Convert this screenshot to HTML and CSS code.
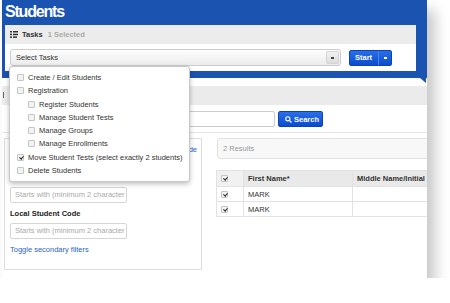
FILE: index.html
```html
<!DOCTYPE html>
<html lang="en">

<head>
    <meta charset="UTF-8">
    <meta name="viewport" content="width=device-width, initial-scale=1.0">
    <title>Students</title>
    <link rel="stylesheet" href="styles.css">
</head>

<body>
    <div class="shot">
        <header class="banner">
            <h1 class="title">Students</h1>
            <div class="tasks">
                <div class="tasks-bar">
                    <svg class="tasks-icon" width="8" height="7" viewBox="0 0 8 7">
                        <rect x="0" y="0" width="2" height="1.5" fill="#333"/>
                        <rect x="3" y="0" width="5" height="1.5" fill="#333"/>
                        <rect x="0" y="2.7" width="2" height="1.5" fill="#333"/>
                        <rect x="3" y="2.7" width="5" height="1.5" fill="#333"/>
                        <rect x="0" y="5.4" width="2" height="1.5" fill="#333"/>
                        <rect x="3" y="5.4" width="4" height="1.5" fill="#333"/>
                    </svg>
                    <span class="tasks-label">Tasks</span>
                    <span class="tasks-count">1 Selected</span>
                </div>
                <div class="tasks-row">
                    <div class="select">
                        <span class="select-text">Select Tasks</span>
                        <span class="select-arrow"><i></i></span>
                    </div>
                    <div class="btn-group">
                        <span class="btn-main">Start</span>
                        <span class="btn-caret"><i></i></span>
                    </div>
                </div>
            </div>
            <span class="notch"></span>
        </header>

        <div class="band"><span class="band-mark"></span></div>

        <div class="search-row">
            <div class="search-input"></div>
            <button class="btn-search">
                <svg width="7" height="7" viewBox="0 0 10 10">
                    <circle cx="4" cy="4" r="3" fill="none" stroke="#fff" stroke-width="1.6"/>
                    <line x1="6.2" y1="6.2" x2="9.2" y2="9.2" stroke="#fff" stroke-width="1.8"/>
                </svg>
                Search
            </button>
        </div>

        <div class="columns">
            <aside class="filters">
                <div class="filters-top"><a class="link">de</a></div>
                <div class="field-input first">Starts with (minimum 2 character</div>
                <div class="field-label">Local Student Code</div>
                <div class="field-input">Starts with (minimum 2 character</div>
                <a class="link toggle">Toggle secondary filters</a>
            </aside>

            <section class="results">
                <div class="results-count">2 Results</div>
                <table class="grid">
                    <tr class="grid-head">
                        <th class="col-cb"><span class="cb checked"></span></th>
                        <th class="col-first">First Name*</th>
                        <th>Middle Name/Initial</th>
                    </tr>
                    <tr>
                        <td class="col-cb"><span class="cb checked"></span></td>
                        <td>MARK</td>
                        <td></td>
                    </tr>
                    <tr>
                        <td class="col-cb"><span class="cb checked"></span></td>
                        <td>MARK</td>
                        <td></td>
                    </tr>
                </table>
            </section>
        </div>

        <ul class="menu">
            <li><span class="cb"></span>Create / Edit Students</li>
            <li><span class="cb"></span>Registration</li>
            <li class="sub"><span class="cb"></span>Register Students</li>
            <li class="sub"><span class="cb"></span>Manage Student Tests</li>
            <li class="sub"><span class="cb"></span>Manage Groups</li>
            <li class="sub"><span class="cb"></span>Manage Enrollments</li>
            <li><span class="cb checked"></span>Move Student Tests (select exactly 2 students)</li>
            <li><span class="cb"></span>Delete Students</li>
        </ul>
    </div>
</body>

</html>
```

FILE: styles.css
```css
body {
    margin: 0;
    background-color: #fff;
    font-family: "Liberation Sans", Arial, sans-serif;
    font-size: 7.5px;
    color: #333;
}

.shot {
    position: relative;
    margin-left: 2px;
    width: 425px;
    height: 278px;
    background-color: #fff;
    box-shadow: 8px 10px 13px rgba(0, 0, 0, 0.22);
    overflow: hidden;
}

/* blue header with task panel */
.banner {
    position: relative;
    height: 78px;
    padding: 0 11px 0 3px;
    box-sizing: border-box;
    background-color: #1b53b1;
}

.title {
    margin: 0;
    height: 25px;
    line-height: 24px;
    font-size: 16px;
    font-weight: bold;
    letter-spacing: -1.2px;
    color: #fff;
}

.tasks {
    height: 46px;
    background-color: #fff;
}

.tasks-bar {
    display: flex;
    align-items: center;
    height: 19px;
    padding-left: 5px;
    background-color: #ececec;
}

.tasks-label {
    margin-left: 4px;
    font-weight: bold;
    color: #333;
}

.tasks-count {
    margin-left: 5px;
    font-weight: bold;
    color: #aaa;
}

.tasks-row {
    display: flex;
    gap: 8px;
    padding: 5px 5px 0 5px;
}

.select {
    display: flex;
    width: 331px;
    height: 17px;
    box-sizing: border-box;
    border: 1px solid #ccc;
    border-radius: 3px;
    background: linear-gradient(#fdfdfd, #ececec);
}

.select-text {
    flex: 1;
    padding-left: 5px;
    line-height: 15px;
    color: #333;
}

.select-arrow {
    display: flex;
    align-items: center;
    justify-content: center;
    width: 11px;
    margin: 1px;
    border: 1px solid #d4d4d4;
    border-radius: 2px;
    background: linear-gradient(#f2f2f2, #dcdcdc);
}

.select-arrow i {
    width: 3px;
    height: 2px;
    background-color: #444;
}

.btn-group {
    display: flex;
    width: 43px;
    height: 16px;
    margin-top: 1px;
    border-radius: 2px;
    background: linear-gradient(#2a6fe9, #0b4ccc);
    border: 1px solid #0b45b5;
    box-sizing: border-box;
}

.btn-main {
    flex: 1;
    padding-left: 5px;
    line-height: 14px;
    font-weight: bold;
    color: #fff;
}

.btn-caret {
    display: flex;
    align-items: center;
    justify-content: center;
    width: 12px;
    border-left: 1px solid #4a82e6;
}

.btn-caret i {
    width: 3px;
    height: 1.5px;
    background-color: #fff;
}

.notch {
    position: absolute;
    right: 1px;
    bottom: -5px;
    width: 0;
    height: 0;
    border-left: 6px solid transparent;
    border-top: 5px solid #1b53b1;
}

/* page behind the menu */
.band {
    position: relative;
    height: 19px;
    margin-top: 8px;
    background-color: #ebebeb;
}

.band-mark {
    position: absolute;
    left: 1px;
    top: 6px;
    width: 1px;
    height: 6px;
    background-color: #666;
}

.search-row {
    display: flex;
    gap: 3px;
    height: 16px;
    margin-top: 6px;
    padding: 0 0 5px 8px;
    border-bottom: 1px solid #e3e3e3;
}

.search-input {
    width: 265px;
    box-sizing: border-box;
    border: 1px solid #ccc;
    border-radius: 2px;
}

.btn-search {
    display: flex;
    align-items: center;
    gap: 2px;
    width: 45px;
    padding: 0 0 0 6px;
    border: 1px solid #0b45b5;
    border-radius: 2px;
    background: linear-gradient(#2a6fe9, #0b4ccc);
    font-family: inherit;
    font-size: 7.5px;
    font-weight: bold;
    color: #fff;
}

.columns {
    display: flex;
    gap: 15px;
    margin-top: 5px;
    padding-left: 2px;
}

.filters {
    width: 198px;
    height: 132px;
    box-sizing: border-box;
    padding: 6px 4px 0 5px;
    border: 1px solid #ddd;
    flex-shrink: 0;
}

.filters-top {
    height: 10px;
    line-height: 10px;
    text-align: right;
}

.link {
    color: #2c63c8;
}

.field-label {
    margin-top: 6px;
    height: 10px;
    line-height: 10px;
    font-weight: bold;
    color: #222;
}

.field-input {
    width: 117px;
    height: 16px;
    margin-top: 4px;
    padding-left: 4px;
    box-sizing: border-box;
    border: 1px solid #d6d6d6;
    border-radius: 2px;
    line-height: 14px;
    color: #aaa;
    white-space: nowrap;
    overflow: hidden;
}

.field-input.first {
    margin-top: 32px;
}

.toggle {
    display: block;
    margin-top: 6px;
    line-height: 10px;
}

.results {
    width: 240px;
    flex-shrink: 0;
}

.results-count {
    height: 21px;
    padding-left: 5px;
    box-sizing: border-box;
    border: 1px solid #e2e2e2;
    border-radius: 3px;
    background-color: #f8f8f8;
    line-height: 19px;
    color: #999;
}

.grid {
    width: 240px;
    margin: 11px 0 0 -1px;
    border-collapse: collapse;
}

.grid th,
.grid td {
    height: 14px;
    padding: 0 0 0 4px;
    border: 1px solid #e2e2e2;
    text-align: left;
    color: #333;
}

.grid th {
    height: 15px;
    background-color: #e9e9e9;
    font-weight: bold;
}

.grid th.col-cb {
    background-color: #f1f1f1;
}

.col-cb {
    width: 22px;
}

.col-first {
    width: 104px;
}

/* checkboxes */
.cb {
    display: inline-block;
    position: relative;
    width: 5px;
    height: 5px;
    margin-right: 6px;
    border: 1px solid #c4c4c4;
    border-radius: 1px;
    background-color: #f3f3f3;
    vertical-align: -1px;
}

.menu .cb {
    margin-right: 4px;
}

.cb.checked::after {
    content: "";
    position: absolute;
    left: 1.5px;
    top: 0;
    width: 1.5px;
    height: 3px;
    border-right: 1px solid #222;
    border-bottom: 1px solid #222;
    transform: rotate(40deg);
}

/* task dropdown */
.menu {
    position: absolute;
    left: 7px;
    top: 66px;
    width: 181px;
    height: 116px;
    margin: 0;
    padding: 4px 0 0 7px;
    box-sizing: border-box;
    list-style: none;
    background-color: #fff;
    border: 1px solid #c8c8c8;
    border-radius: 3px;
    box-shadow: 0 2px 5px rgba(0, 0, 0, 0.25);
}

.menu li {
    height: 13.3px;
    line-height: 13.3px;
    white-space: nowrap;
    color: #333;
}

.menu li.sub {
    padding-left: 11px;
}
```
